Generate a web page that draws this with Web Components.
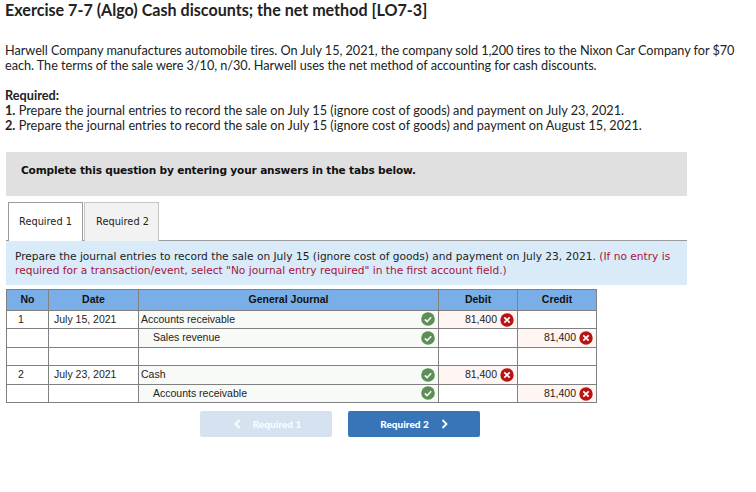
<!DOCTYPE html>
<html lang="en"><head><meta charset="utf-8"><title>Exercise 7-7</title>
<style>
html,body{margin:0;padding:0;background:#fff}
body{width:756px;height:492px;overflow:hidden}
</style></head><body>
<ex-page></ex-page>
<script>
function def(name, css, html){
  customElements.define(name, class extends HTMLElement{
    connectedCallback(){
      if(this.shadowRoot) return;
      const r=this.attachShadow({mode:'open'});
      r.innerHTML='<style>'+css+'</style>'+(typeof html==='function'?html(this):html);
    }
  });
}
const ok='<svg width="14" height="14" viewBox="0 0 14 14"><circle cx="7" cy="7" r="6.8" fill="#5c8f58"/><path d="M3.8 7.3l2.3 2.2 4.1-4.2" fill="none" stroke="#f2f5f1" stroke-width="1.6"/></svg>';
const bad='<svg width="14" height="14" viewBox="0 0 14 14"><circle cx="7" cy="7" r="6.7" fill="#b81414"/><path d="M4.3 4.3l5.4 5.4M9.7 4.3l-5.4 5.4" fill="none" stroke="#fff" stroke-width="1.7"/></svg>';
const chev=d=>`<svg width="7" height="10" viewBox="0 0 7 10"><path d="${d}" fill="none" stroke="currentColor" stroke-width="1.8"/></svg>`;

def('ex-intro',`:host{display:block;font:12.7px/15px Lato,"Open Sans",sans-serif;color:#222;padding:0 0 0 5px}
h1{font:700 16.1px/20px Lato,sans-serif;margin:0;color:#222}
p{margin:0;white-space:nowrap}
.a{margin-top:23px;letter-spacing:-.04px}.b{margin-top:15px;letter-spacing:.015px}b{font-weight:700}`,
`<h1>Exercise 7-7 (Algo) Cash discounts; the net method [LO7-3]</h1>
<p class="a">Harwell Company manufactures automobile tires. On July 15, 2021, the company sold 1,200 tires to the Nixon Car Company for $70<br>each. The terms of the sale were 3/10, n/30. Harwell uses the net method of accounting for cash discounts.</p>
<p class="b"><b>Required:</b><br><b>1.</b> Prepare the journal entries to record the sale on July 15 (ignore cost of goods) and payment on July 23, 2021.<br><b>2.</b> Prepare the journal entries to record the sale on July 15 (ignore cost of goods) and payment on August 15, 2021.</p>`);

def('ex-banner',`:host{display:block;margin:19px 0 0 6px;width:681px;height:44px;box-sizing:border-box;background:#e0e0e0;padding:11px 15px 0;font:700 10.6px/14px "DejaVu Sans",Verdana,sans-serif;letter-spacing:-.17px;color:#111}`,
`<slot></slot>`);

def('ex-tabs',`:host{display:flex;gap:1px;margin:6px 0 0 8px;height:38px;font:9.8px/14px "DejaVu Sans",Verdana,sans-serif;color:#222}`,`<slot></slot>`);
def('ex-tab',`:host{display:flex;align-items:center;justify-content:center;box-sizing:border-box;width:75px;height:39px;padding:0 0 1px 2px;border:1px solid #c4c4c4;border-bottom:0;background:#f2f2f2}
:host([active]){background:#fff;border-color:#9a9a9a;padding-left:0}`,`<slot></slot>`);

def('ex-instruction',`:host{display:block;margin-left:6px;width:681px;height:45px;box-sizing:border-box;border-top:1px solid #999;background:#d9ebf9;padding:9px 9px 0;font:10.62px/14px "DejaVu Sans",Verdana,sans-serif;color:#222;white-space:nowrap}
span{color:#a8123c}`,
`Prepare the journal entries to record the sale on July 15 (ignore cost of goods) and payment on July 23, 2021. <span>(If no entry is<br>required for a transaction/event, select "No journal entry required" in the first account field.)</span>`);

const rows=[
 ['1','July 15, 2021','Accounts receivable',0,1,0,18,0],
 ['','','Sales revenue',1,0,1,19,1],
 ['','','',2,0,0,18,0],
 ['2','July 23, 2021','Cash',0,1,0,19,1],
 ['','','Accounts receivable',1,0,1,18,0]];
def('ex-journal',`:host{display:block;margin:4px 0 0 6px;font:10.5px/13px "Liberation Sans",Arial,sans-serif;color:#222}
table{border-collapse:collapse;table-layout:fixed;width:590px}
th,td{border:1px solid #808080;padding:0;box-sizing:border-box;white-space:nowrap}
th{background:#7aaee6;font-weight:700;height:21px;padding-bottom:2px;text-align:center;color:#111;font-size:10.5px}
td{vertical-align:middle}
tr.up td{padding-bottom:1px}
.no{padding-left:11px}.date{padding-left:5px}
.acct{background:#f7faf6;padding-left:2px;position:relative}
.acct.none{background:#fff}
.acct.ind{padding-left:14px}
.acct svg{position:absolute;right:3px;top:50%;margin-top:-7.5px}
.num{text-align:right}
.num.err{background:#fff5f3;padding-right:3px}
.num div{display:flex;justify-content:flex-end;align-items:center;gap:3px}
`,
()=>`<table><colgroup><col style="width:42px"><col style="width:90px"><col style="width:300px"><col style="width:79px"><col style="width:79px"></colgroup>
<thead><tr><th>No</th><th>Date</th><th>General Journal</th><th>Debit</th><th>Credit</th></tr></thead><tbody>`+
rows.map(r=>`<tr class="${r[7]?'up':''}" style="height:${r[6]}px"><td class="no">${r[0]}</td><td class="date">${r[1]}</td>
<td class="acct ${r[3]==1?'ind':''} ${r[3]==2?'none':''}">${r[2]}${r[3]==2?'':ok}</td>
<td class="num ${r[4]?'err':''}">${r[4]?`<div>81,400${bad}</div>`:''}</td>
<td class="num ${r[5]?'err':''}">${r[5]?`<div>81,400${bad}</div>`:''}</td></tr>`).join('')+`</tbody></table>`);

def('ex-nav',`:host{display:flex;gap:16px;margin:8px 0 0 200px}`,`<slot></slot>`);
def('ex-navbtn',`:host{display:flex;align-items:center;justify-content:center;gap:12px;box-sizing:border-box;width:132px;height:26px;border-radius:2px;background:#3874b8;color:#fff;font:900 10px/14px Lato,sans-serif}
:host([disabled]){background:#d6e2f0;color:#fafcfe;padding-left:3px}`,
h=>h.hasAttribute('disabled')?`${chev('M5.5 1L1.5 5l4 4')}<slot></slot>`:`<slot></slot>${chev('M1.5 1l4 4-4 4')}`);

def('ex-page',`:host{display:block}`,
`<ex-intro></ex-intro>
<ex-banner>Complete this question by entering your answers in the tabs below.</ex-banner>
<ex-tabs><ex-tab active>Required 1</ex-tab><ex-tab>Required 2</ex-tab></ex-tabs>
<ex-instruction></ex-instruction>
<ex-journal></ex-journal>
<ex-nav><ex-navbtn disabled>Required 1</ex-navbtn><ex-navbtn>Required 2</ex-navbtn></ex-nav>`);
</script></body></html>
